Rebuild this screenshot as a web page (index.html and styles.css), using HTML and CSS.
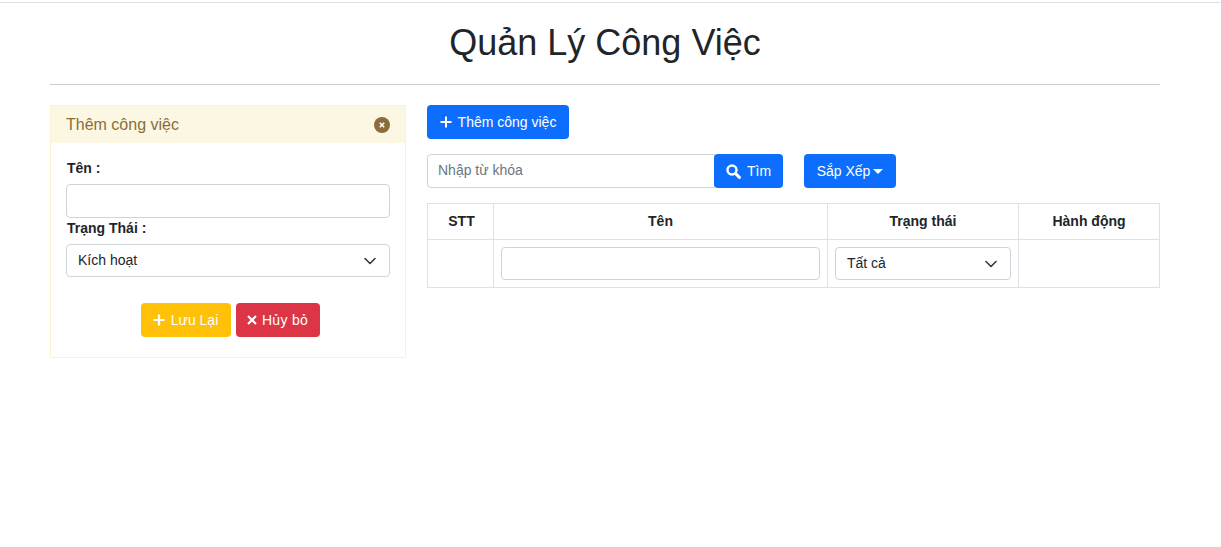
FILE: index.html
```html
<!DOCTYPE html>
<html lang="en">
<head>
    <meta charset="UTF-8">
    <meta name="viewport" content="width=device-width, initial-scale=1.0">
    <title>Quản Lý Công Việc</title>
    <link rel="stylesheet" href="styles.css">
</head>
<body>
    <div class="top-line"></div>
    <div class="container">
        <h1>Quản Lý Công Việc</h1>
        <hr class="divider">

        <div class="columns">
            <!-- Add task panel -->
            <div class="panel">
                <div class="panel-heading">
                    <span>Thêm công việc</span>
                    <span class="panel-close">
                        <svg width="6" height="6" viewBox="0 0 6 6" fill="none" stroke="#fff" stroke-width="1.6">
                            <path d="M0.8 0.8 5.2 5.2M5.2 0.8 0.8 5.2"></path>
                        </svg>
                    </span>
                </div>
                <div class="panel-body">
                    <label class="field-label label-name">Tên :</label>
                    <input type="text" class="form-control input-name">
                    <label class="field-label label-status">Trạng Thái :</label>
                    <div class="form-select select-status">
                        <span>Kích hoạt</span>
                        <svg class="chevron" width="12" height="8" viewBox="0 0 12 8" fill="none" stroke="#343a40" stroke-width="1.6" stroke-linecap="round" stroke-linejoin="round">
                            <path d="M1 1.5 6 6.5 11 1.5"></path>
                        </svg>
                    </div>
                    <div class="panel-actions">
                        <button class="btn btn-warning">
                            <svg class="btn-icon" width="12" height="12" viewBox="0 0 12 12" fill="none" stroke="#fff" stroke-width="2.2">
                                <path d="M6 0.5V11.5M0.5 6H11.5"></path>
                            </svg>
                            Lưu Lại
                        </button>
                        <button class="btn btn-danger">
                            <svg class="btn-icon icon-x" width="10" height="10" viewBox="0 0 10 10" fill="none" stroke="#fff" stroke-width="2.2">
                                <path d="M1 1 9 9M9 1 1 9"></path>
                            </svg>
                            Hủy bỏ
                        </button>
                    </div>
                </div>
            </div>

            <!-- Task list -->
            <div class="main">
                <button class="btn btn-primary btn-add">
                    <svg class="btn-icon" width="12" height="12" viewBox="0 0 12 12" fill="none" stroke="#fff" stroke-width="2">
                        <path d="M6 0.5V11.5M0.5 6H11.5"></path>
                    </svg>
                    Thêm công việc
                </button>

                <div class="toolbar">
                    <div class="search-group">
                        <input type="text" class="form-control search-input" placeholder="Nhập từ khóa">
                        <button class="btn btn-primary btn-search">
                            <svg class="btn-icon" width="15" height="15" viewBox="0 0 15 15" fill="none" stroke="#fff">
                                <circle cx="6" cy="6" r="4.5" stroke-width="2.4"></circle>
                                <path d="M9.5 9.5 13.4 13.4" stroke-width="3" stroke-linecap="round"></path>
                            </svg>
                            Tìm
                        </button>
                    </div>
                    <button class="btn btn-primary btn-sort">Sắp Xếp<span class="caret"></span></button>
                </div>

                <table class="task-table">
                    <thead>
                        <tr>
                            <th class="col-stt">STT</th>
                            <th class="col-name">Tên</th>
                            <th class="col-status">Trạng thái</th>
                            <th class="col-action">Hành động</th>
                        </tr>
                    </thead>
                    <tbody>
                        <tr>
                            <td></td>
                            <td><input type="text" class="form-control table-input"></td>
                            <td>
                                <div class="form-select table-select">
                                    <span>Tất cả</span>
                                    <svg class="chevron" width="12" height="8" viewBox="0 0 12 8" fill="none" stroke="#343a40" stroke-width="1.6" stroke-linecap="round" stroke-linejoin="round">
                                        <path d="M1 1.5 6 6.5 11 1.5"></path>
                                    </svg>
                                </div>
                            </td>
                            <td></td>
                        </tr>
                    </tbody>
                </table>
            </div>
        </div>
    </div>
</body>
</html>
```

FILE: styles.css
```css
* {
    box-sizing: border-box;
}

body {
    margin: 0;
    background-color: #fff;
    color: #212529;
    font-family: "Liberation Sans", Arial, sans-serif;
    font-size: 14px;
}

.top-line {
    height: 3px;
    border-bottom: 1px solid #dee2e6;
}

.container {
    width: 1110px;
    margin-left: 50px;
}

h1 {
    margin: 0;
    padding-top: 17px;
    height: 64px;
    text-align: center;
    font-size: 36px;
    line-height: 45px;
    font-weight: 400;
}

.divider {
    margin: 17px 0 20px;
    border: none;
    border-top: 1px solid #ccc;
}

.columns {
    display: flex;
    gap: 21px;
    align-items: flex-start;
}

/* Left panel */
.panel {
    width: 356px;
    height: 253px;
    border: 1px solid #faf0d2;
}

.panel-heading {
    display: flex;
    align-items: center;
    justify-content: space-between;
    height: 37px;
    padding: 0 15px;
    background-color: #fcf7e2;
    color: #8a6d3b;
    font-size: 16px;
}

.panel-close {
    display: flex;
    align-items: center;
    justify-content: center;
    width: 16px;
    height: 16px;
    border-radius: 50%;
    background-color: #8a6d3b;
}

.panel-body {
    padding: 0 15px;
}

.field-label {
    display: block;
    padding-left: 1px;
    font-weight: 700;
    line-height: 16px;
}

.label-name {
    padding-top: 17px;
    height: 41px;
}

.label-status {
    height: 26px;
    padding-top: 2px;
}

.form-control {
    display: block;
    border: 1px solid #ced4da;
    border-radius: 4px;
    background-color: #fff;
    font-family: inherit;
    font-size: 14px;
    outline: none;
}

.input-name {
    width: 324px;
    height: 34px;
}

.form-select {
    display: flex;
    align-items: center;
    justify-content: space-between;
    border: 1px solid #ced4da;
    border-radius: 4px;
    background-color: #fff;
    padding: 0 13px 2px 11px;
}

.select-status {
    width: 324px;
    height: 33px;
}

.chevron {
    margin-top: 2px;
}

.panel-actions {
    display: flex;
    justify-content: center;
    gap: 5px;
    margin-top: 26px;
    padding-left: 4px;
}

/* Buttons */
.btn {
    display: inline-flex;
    align-items: center;
    justify-content: center;
    height: 34px;
    border: none;
    border-radius: 4px;
    color: #fff;
    font-family: inherit;
    font-size: 14px;
    white-space: nowrap;
}

.btn-icon {
    margin-right: 6px;
}

.icon-x {
    margin-right: 5px;
}

.btn-warning {
    width: 90px;
    background-color: #ffc107;
}

.btn-danger {
    width: 84px;
    background-color: #dc3545;
    letter-spacing: 0.3px;
}

.btn-primary {
    background-color: #0d6efd;
}

.btn-add {
    width: 142px;
}

/* Right column */
.main {
    width: 733px;
}

.toolbar {
    display: flex;
    gap: 21px;
    margin-top: 15px;
}

.search-group {
    display: flex;
}

.search-input {
    width: 288px;
    height: 34px;
    padding: 0 10px 2px;
    border-radius: 4px 0 0 4px;
}

.search-input::placeholder {
    color: #6c757d;
}

.btn-search {
    width: 69px;
    margin-left: -1px;
    font-size: 14px;
}

.btn-sort {
    width: 92px;
}

.caret {
    margin-left: 3px;
    border-top: 5px solid #fff;
    border-left: 5px solid transparent;
    border-right: 5px solid transparent;
}

/* Table */
.task-table {
    width: 733px;
    margin-top: 15px;
    border-collapse: collapse;
    table-layout: fixed;
}

.task-table th,
.task-table td {
    border: 1px solid #dee2e6;
}

.task-table th {
    height: 36px;
    padding-bottom: 2px;
    font-weight: 700;
    font-size: 14px;
    text-align: center;
}

.task-table td {
    height: 48px;
    padding: 0 7px;
}

.task-table .col-stt {
    width: 66px;
    padding-left: 3px;
}

.col-name {
    width: 334px;
}

.col-status {
    width: 191px;
}

.table-input {
    width: 319px;
    height: 33px;
}

.table-select {
    height: 33px;
    width: 176px;
}
```
